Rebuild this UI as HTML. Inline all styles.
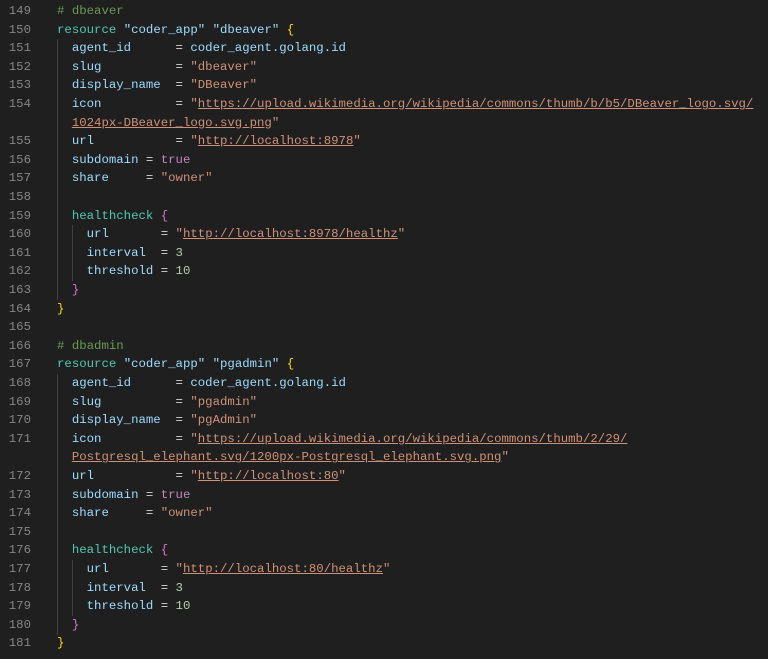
<!DOCTYPE html><html><head><style>
html,body{margin:0;width:768px;height:659px;overflow:hidden;}
body{background:#1f1f1f;font-family:"Liberation Mono",monospace;font-size:12.35px;position:relative;}
.r{position:absolute;left:0;height:18.6px;line-height:18.6px;white-space:pre;color:#d4d4d4;}
.n{position:absolute;left:0;width:31px;text-align:right;color:#858585;}
.t{position:absolute;left:57px;}
.c{color:#6a9955}.k{color:#4ec9b0}.b{color:#9cdcfe}.s{color:#ce9178}.u{color:#ce9178;text-decoration:underline}
.num{color:#b5cea8}.tr{color:#c586c0}.y{color:#ffd700}.p{color:#da70d6}.o{color:#d4d4d4}
.g{position:absolute;width:1px;background:#404040}
</style></head><body>
<div class="g" style="left:57px;top:39px;height:261px"></div>
<div class="g" style="left:72px;top:225px;height:56px"></div>
<div class="g" style="left:57px;top:374px;height:261px"></div>
<div class="g" style="left:72px;top:560px;height:56px"></div>
<div class="r" style="top:2px"><span class="n">149</span><span class="t"><span class="c"># dbeaver</span></span></div>
<div class="r" style="top:20.6px"><span class="n">150</span><span class="t"><span class="k">resource</span> <span class="b">"coder_app"</span> <span class="b">"dbeaver"</span> <span class="y">{</span></span></div>
<div class="r" style="top:39.2px"><span class="n">151</span><span class="t">  <span class="b">agent_id</span>      = <span class="b">coder_agent.golang.id</span></span></div>
<div class="r" style="top:57.8px"><span class="n">152</span><span class="t">  <span class="b">slug</span>          = <span class="s">"dbeaver"</span></span></div>
<div class="r" style="top:76.4px"><span class="n">153</span><span class="t">  <span class="b">display_name</span>  = <span class="s">"DBeaver"</span></span></div>
<div class="r" style="top:95px"><span class="n">154</span><span class="t">  <span class="b">icon</span>          = <span class="s">"</span><span class="u">https://upload.wikimedia.org/wikipedia/commons/thumb/b/b5/DBeaver_logo.svg/</span></span></div>
<div class="r" style="top:113.6px"><span class="t">  <span class="u">1024px-DBeaver_logo.svg.png</span><span class="s">"</span></span></div>
<div class="r" style="top:132.2px"><span class="n">155</span><span class="t">  <span class="b">url</span>           = <span class="s">"</span><span class="u">http://localhost:8978</span><span class="s">"</span></span></div>
<div class="r" style="top:150.8px"><span class="n">156</span><span class="t">  <span class="b">subdomain</span> = <span class="tr">true</span></span></div>
<div class="r" style="top:169.4px"><span class="n">157</span><span class="t">  <span class="b">share</span>     = <span class="s">"owner"</span></span></div>
<div class="r" style="top:188px"><span class="n">158</span></div>
<div class="r" style="top:206.6px"><span class="n">159</span><span class="t">  <span class="k">healthcheck</span> <span class="p">{</span></span></div>
<div class="r" style="top:225.2px"><span class="n">160</span><span class="t">    <span class="b">url</span>       = <span class="s">"</span><span class="u">http://localhost:8978/healthz</span><span class="s">"</span></span></div>
<div class="r" style="top:243.8px"><span class="n">161</span><span class="t">    <span class="b">interval</span>  = <span class="num">3</span></span></div>
<div class="r" style="top:262.4px"><span class="n">162</span><span class="t">    <span class="b">threshold</span> = <span class="num">10</span></span></div>
<div class="r" style="top:281px"><span class="n">163</span><span class="t">  <span class="p">}</span></span></div>
<div class="r" style="top:299.6px"><span class="n">164</span><span class="t"><span class="y">}</span></span></div>
<div class="r" style="top:318.2px"><span class="n">165</span></div>
<div class="r" style="top:336.8px"><span class="n">166</span><span class="t"><span class="c"># dbadmin</span></span></div>
<div class="r" style="top:355.4px"><span class="n">167</span><span class="t"><span class="k">resource</span> <span class="b">"coder_app"</span> <span class="b">"pgadmin"</span> <span class="y">{</span></span></div>
<div class="r" style="top:374px"><span class="n">168</span><span class="t">  <span class="b">agent_id</span>      = <span class="b">coder_agent.golang.id</span></span></div>
<div class="r" style="top:392.6px"><span class="n">169</span><span class="t">  <span class="b">slug</span>          = <span class="s">"pgadmin"</span></span></div>
<div class="r" style="top:411.2px"><span class="n">170</span><span class="t">  <span class="b">display_name</span>  = <span class="s">"pgAdmin"</span></span></div>
<div class="r" style="top:429.8px"><span class="n">171</span><span class="t">  <span class="b">icon</span>          = <span class="s">"</span><span class="u">https://upload.wikimedia.org/wikipedia/commons/thumb/2/29/</span></span></div>
<div class="r" style="top:448.4px"><span class="t">  <span class="u">Postgresql_elephant.svg/1200px-Postgresql_elephant.svg.png</span><span class="s">"</span></span></div>
<div class="r" style="top:467px"><span class="n">172</span><span class="t">  <span class="b">url</span>           = <span class="s">"</span><span class="u">http://localhost:80</span><span class="s">"</span></span></div>
<div class="r" style="top:485.6px"><span class="n">173</span><span class="t">  <span class="b">subdomain</span> = <span class="tr">true</span></span></div>
<div class="r" style="top:504.2px"><span class="n">174</span><span class="t">  <span class="b">share</span>     = <span class="s">"owner"</span></span></div>
<div class="r" style="top:522.8px"><span class="n">175</span></div>
<div class="r" style="top:541.4px"><span class="n">176</span><span class="t">  <span class="k">healthcheck</span> <span class="p">{</span></span></div>
<div class="r" style="top:560px"><span class="n">177</span><span class="t">    <span class="b">url</span>       = <span class="s">"</span><span class="u">http://localhost:80/healthz</span><span class="s">"</span></span></div>
<div class="r" style="top:578.6px"><span class="n">178</span><span class="t">    <span class="b">interval</span>  = <span class="num">3</span></span></div>
<div class="r" style="top:597.2px"><span class="n">179</span><span class="t">    <span class="b">threshold</span> = <span class="num">10</span></span></div>
<div class="r" style="top:615.8px"><span class="n">180</span><span class="t">  <span class="p">}</span></span></div>
<div class="r" style="top:634.4px"><span class="n">181</span><span class="t"><span class="y">}</span></span></div>
<div class="r" style="top:650px;height:9px;overflow:hidden"><span class="n">182</span></div>
</body></html>
